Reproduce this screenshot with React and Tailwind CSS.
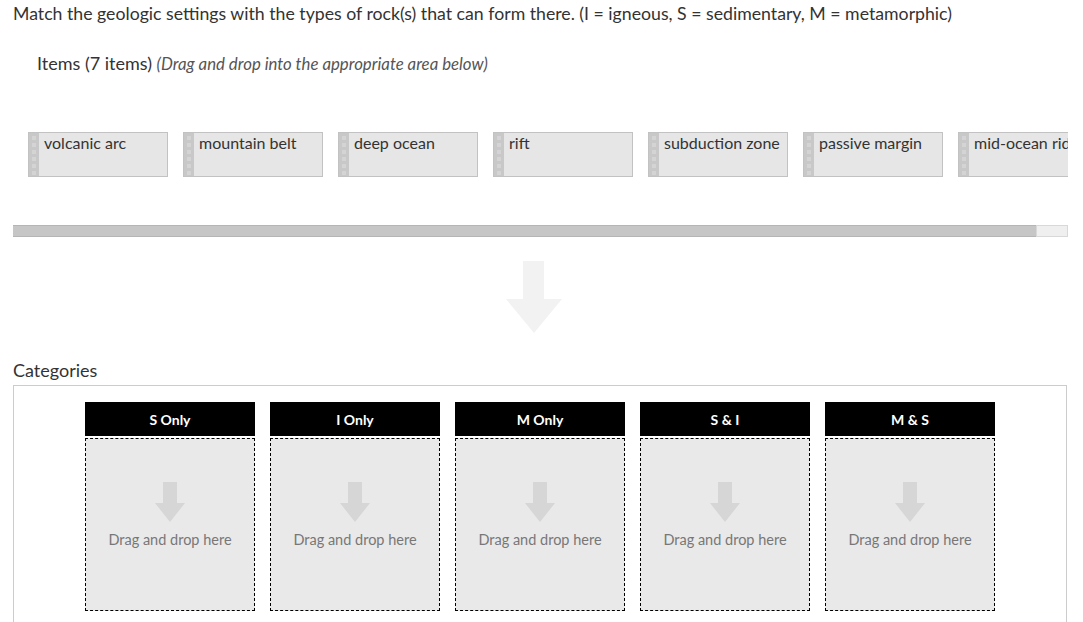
const items = ['volcanic arc', 'mountain belt', 'deep ocean', 'rift', 'subduction zone', 'passive margin', 'mid-ocean ridge'];
const categories = ['S Only', 'I Only', 'M Only', 'S & I', 'M & S'];

const ItemCard = ({ label }) => (
  <div className="flex h-[45px] w-[140px] shrink-0 border border-[#c2c2c2] bg-[#e6e6e6]">
    <div className="flex w-[10px] shrink-0 flex-col items-center gap-[3px] bg-[#c8c8c8] pt-[3px]">
      {[0, 1, 2, 3, 4, 5].map((i) => (
        <span key={i} className="block h-[4px] w-[4px] bg-[#d4d4d4]" />
      ))}
    </div>
    <div className="whitespace-nowrap pl-[5px] text-[16px] leading-[19px] text-[#333]">{label}</div>
  </div>
);

const SmallArrow = () => (
  <svg width="30" height="40" viewBox="0 0 30 40">
    <path d="M8 0 H22 V21 H30 L15 40 L0 21 H8 Z" fill="#d6d6d6" />
  </svg>
);

const Category = ({ title }) => (
  <div className="flex w-[170px] flex-col gap-[2px]">
    <div className="flex h-[34px] items-center justify-center bg-black text-[14px] font-bold text-white">{title}</div>
    <div className="flex h-[173px] flex-col items-center border border-dashed border-black bg-[#e9e9e9] pt-[43px]">
      <SmallArrow />
      <div className="mt-[7px] text-[14.5px] text-[#777]">Drag and drop here</div>
    </div>
  </div>
);

export default function App() {
  return (
    <div className="min-h-[622px] bg-white pl-[13px] pr-[15px] text-[#333]" style={{ fontFamily: 'Lato, "Open Sans", sans-serif' }}>
      <p className="pt-[3px] text-[17.7px] leading-[22px]">
        Match the geologic settings with the types of rock(s) that can form there. (I = igneous, S = sedimentary, M = metamorphic)
      </p>

      <div className="mt-[27px] pl-[24px] text-[18px] leading-[22px]">
        Items (7 items) <span className="text-[16.8px] italic text-[#555]">(Drag and drop into the appropriate area below)</span>
      </div>

      <div className="mt-[57px] flex gap-[15px] overflow-hidden pl-[15px]">
        {items.map((it) => (
          <ItemCard key={it} label={it} />
        ))}
      </div>

      <div className="mt-[48px] flex h-[12px] w-[1055px]">
        <div className="h-full flex-1 border-y border-[#b5b5b5] bg-[#c6c6c6]" />
        <div className="h-full w-[32px] border border-[#d8d8d8] bg-[#efefef]" />
      </div>

      <div className="mt-[24px] flex justify-center pr-[13px]">
        <svg width="56" height="72" viewBox="0 0 56 72">
          <path d="M17 0 H38 V38 H56 L28 72 L0 38 H17 Z" fill="#f2f2f2" />
        </svg>
      </div>

      <div className="mt-[26px] text-[18px] leading-[22px]">Categories</div>

      <div className="mt-[4px] flex w-[1054px] justify-center gap-[15px] border border-[#cccccc] pb-[20px] pt-[16px]">
        {categories.map((c) => (
          <Category key={c} title={c} />
        ))}
      </div>
    </div>
  );
}
